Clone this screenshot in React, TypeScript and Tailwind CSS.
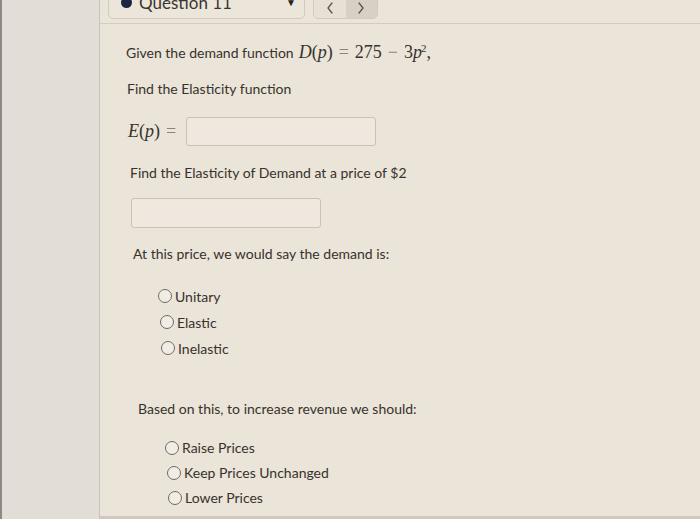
import React from "react";

const textFont = { fontFamily: "Lato, 'Open Sans', sans-serif" };
const mathFont = { fontFamily: "'Liberation Serif', 'DejaVu Serif', serif" };

function Radio({ label, pl, h }: { label: string; pl: string; h: string }) {
  return (
    <div className={`flex items-center ${h} ${pl}`}>
      <span className="w-[14px] h-[14px] rounded-full border-[1.5px] border-[#6f6a64] bg-[#f1ece4] shrink-0" />
      <span className="ml-[3px] text-[14px] text-[#37322e]">{label}</span>
    </div>
  );
}

function Chevron({ dir }: { dir: "l" | "r" }) {
  return (
    <svg width="8" height="12" viewBox="0 0 8 12" className="mt-[10px]">
      <path
        d={dir === "l" ? "M6 1 L2 6 L6 11" : "M2 1 L6 6 L2 11"}
        fill="none"
        stroke="#5a554f"
        strokeWidth="1.3"
        strokeLinecap="round"
        strokeLinejoin="round"
      />
    </svg>
  );
}

export default function App() {
  return (
    <div className="w-[700px] h-[519px] flex overflow-hidden bg-[#e9e1d4]" style={textFont}>
      <div className="w-[100px] shrink-0 bg-[#e2ddd6] border-l-[2px] border-l-[#8d8883] border-r border-r-[#cbc3b8]" />
      <div className="flex-1 flex flex-col bg-[#ebe4d8] border-b-[3px] border-b-[#cfc8bf]">
        {/* header */}
        <div className="flex items-end -mt-[14px] pl-[8px] pb-[4px] border-b border-[#d3cbbf]">
          <div className="w-[197px] h-[33px] rounded-[5px] border border-[#d2cabe] bg-[#ece5d9] flex items-center pl-[12px] pr-[8px]">
            <span className="w-[11px] h-[11px] rounded-full bg-[#1d2545]" />
            <span className="ml-[7px] text-[17px] text-[#3a3531]">Question 11</span>
            <span className="ml-auto text-[10px] text-[#222]">▼</span>
          </div>
          <div className="ml-[8px] w-[65px] h-[33px] rounded-[5px] border border-[#d2cabe] flex overflow-hidden">
            <div className="flex-1 bg-[#e7e0d5] flex items-center justify-center">
              <Chevron dir="l" />
            </div>
            <div className="flex-1 bg-[#d8d0c5] flex items-center justify-center">
              <Chevron dir="r" />
            </div>
          </div>
        </div>

        {/* content */}
        <div className="flex flex-col text-[14px] text-[#37322e]">
          <div className="mt-[18px] pl-[26px] h-[20px] flex items-center">
            <span>Given the demand function</span>
            <span className="ml-[5px] text-[18px] flex items-baseline" style={mathFont}>
              <i>D</i>(<i>p</i>)<span className="text-[#8a847d] mx-[6px]">=</span>275<span className="text-[#8a847d] mx-[6px]">−</span>3<i>p</i>
              <sup className="text-[11px] -ml-[1px]">2</sup>,
            </span>
          </div>
          <div className="mt-[16px] pl-[27px] h-[20px] flex items-center">Find the Elasticity function</div>
          <div className="mt-[19px] pl-[28px] h-[29px] flex items-center">
            <span className="text-[18px] w-[38px]" style={mathFont}>
              <i>E</i>(<i>p</i>)
            </span>
            <span className="text-[18px] text-[#8a847d] w-[20px]" style={mathFont}>=</span>
            <div className="w-[190px] h-[29px] rounded-[3px] border border-[#c9c1b5] bg-[#eee8de]" />
          </div>
          <div className="mt-[16px] pl-[30px] h-[20px] flex items-center">Find the Elasticity of Demand at a price of $2</div>
          <div className="mt-[16px] pl-[31px]">
            <div className="w-[190px] h-[30px] rounded-[3px] border border-[#c9c1b5] bg-[#eee8de]" />
          </div>
          <div className="mt-[15px] pl-[33px] h-[20px] flex items-center">At this price, we would say the demand is:</div>
          <div className="mt-[20px] flex flex-col">
            <Radio label="Unitary" pl="pl-[58px]" h="h-[26px]" />
            <Radio label="Elastic" pl="pl-[60px]" h="h-[26px]" />
            <Radio label="Inelastic" pl="pl-[61px]" h="h-[26px]" />
          </div>
          <div className="mt-[37px] pl-[38px] h-[20px] flex items-center">Based on this, to increase revenue we should:</div>
          <div className="mt-[17px] flex flex-col">
            <Radio label="Raise Prices" pl="pl-[65px]" h="h-[25px]" />
            <Radio label="Keep Prices Unchanged" pl="pl-[67px]" h="h-[25px]" />
            <Radio label="Lower Prices" pl="pl-[68px]" h="h-[25px]" />
          </div>
        </div>
      </div>
    </div>
  );
}
